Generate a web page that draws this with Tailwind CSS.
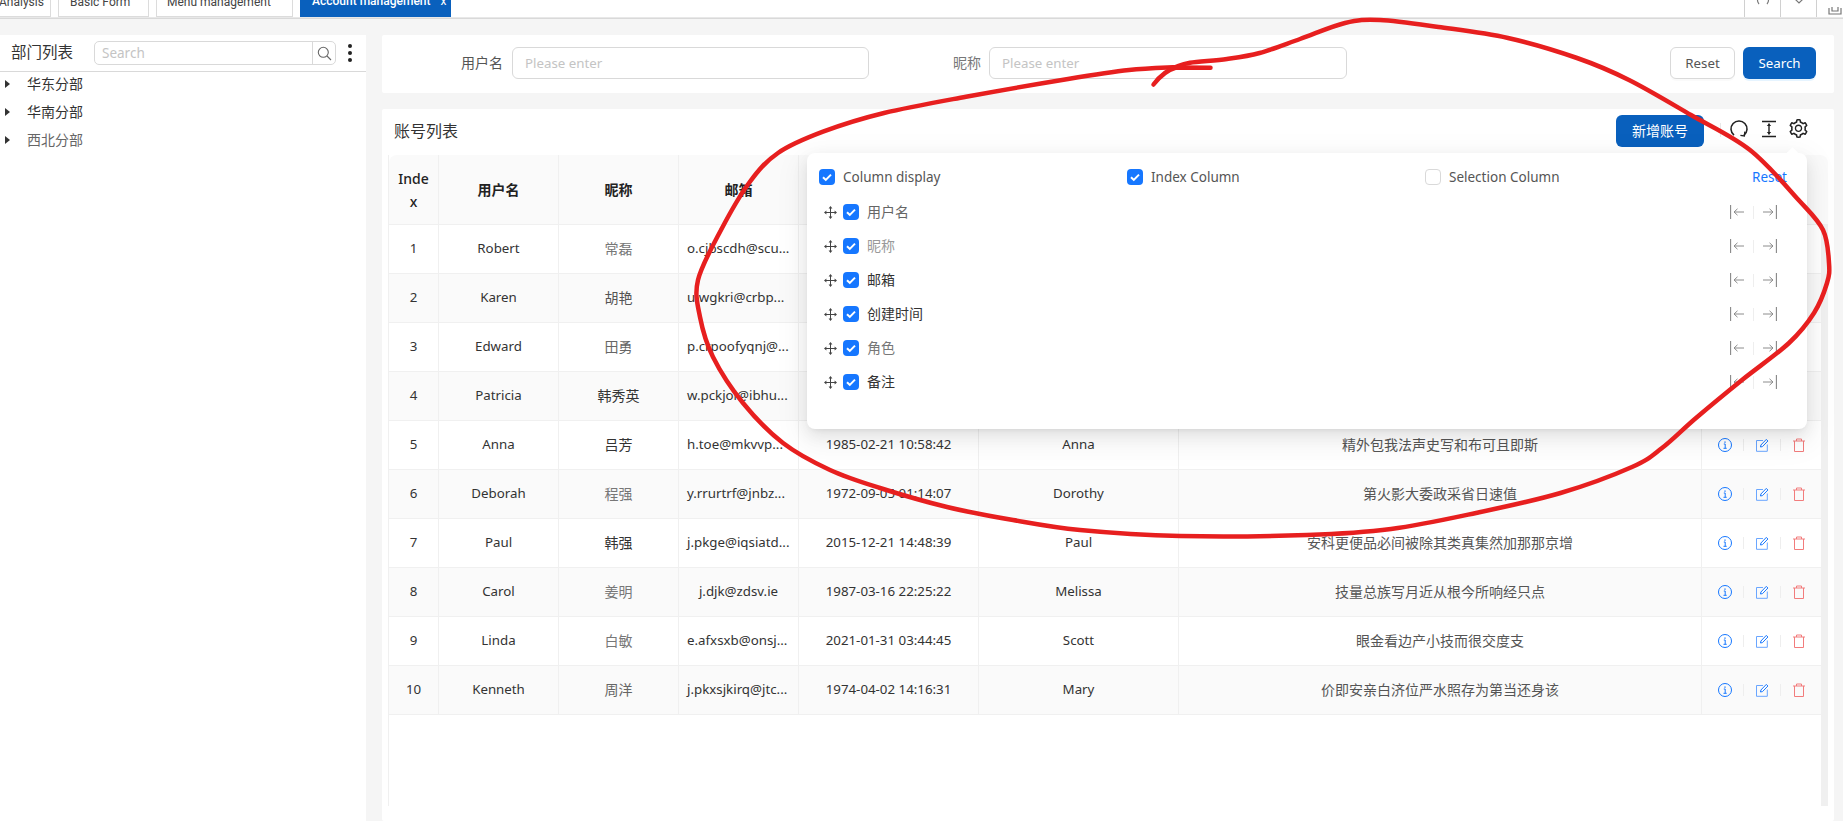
<!DOCTYPE html>
<html lang="zh">
<head>
  <meta charset="UTF-8" />
  <title>Account management</title>
  <script src="https://cdn.jsdelivr.net/npm/@tailwindcss/browser@4"></script>
</head>
<body class="relative h-[821px] overflow-hidden bg-[#f5f5f5] text-[#333] font-['Noto_Sans','Noto_Sans_CJK_SC',sans-serif]">

  <!-- tabs -->
  <div class="h-[19px] overflow-hidden bg-white border-b border-[#d9d9d9] flex items-end">
    <div class="flex-1 flex items-end h-[17px] border-b border-[#e8e8e8] gap-[7px] text-[12px] whitespace-nowrap font-['Roboto',sans-serif]">
      <div class="shrink-0 w-[63px] -ml-[12px] h-[26px] leading-[21px] border border-[#dcdcdc] pl-[10px] text-[#444]">Analysis</div>
      <div class="shrink-0 w-[91px] h-[26px] leading-[21px] border border-[#dcdcdc] pl-[11px] text-[#444]">Basic Form</div>
      <div class="shrink-0 w-[137px] h-[26px] leading-[21px] border border-[#dcdcdc] pl-[10px] text-[#444]">Menu management</div>
      <div class="shrink-0 w-[151px] h-[26px] leading-[21px] flex pl-[12px] gap-[10px] bg-[#0960bd] text-white font-medium">Account management <span class="font-normal text-[12px]">x</span></div>
      <div class="flex-1"></div>
      <div class="shrink-0 w-[36px] h-[26px] border-l border-[#d0d0d0] flex justify-center items-end pb-[10px] text-[#777]">
        <svg class="w-[14px] h-[14px]" viewBox="0 0 14 14" fill="none" stroke="currentColor" stroke-width="1.2"><path d="M3 11A5.5 5.5 0 1 1 11 11"/></svg>
      </div>
      <div class="shrink-0 -ml-[7px] w-[36px] h-[26px] border-l border-[#d0d0d0] flex justify-center items-end pb-[11px] text-[#777]">
        <svg class="w-[14px] h-[14px]" viewBox="0 0 14 14" fill="none" stroke="currentColor" stroke-width="1.2"><path d="M2 6l5 5 5-5"/></svg>
      </div>
      <div class="shrink-0 -ml-[7px] w-[27px] h-[26px] border-l border-[#d0d0d0] pl-[11px] pt-[16px] text-[#777]">
        <svg class="w-[14px] h-[8px]" viewBox="0 0 14 8" fill="none" stroke="currentColor" stroke-width="1.2"><path d="M1 1v6h12V1M4 0v4h6V0"/></svg>
      </div>
    </div>
  </div>

  <main class="flex gap-[16px] pt-[16px] pr-[9px] h-[802px]">

    <!-- department tree -->
    <aside class="w-[366px] shrink-0 bg-white">
      <div class="h-[37px] border-b border-[#d9d9d9] flex items-center">
        <span class="ml-[11px] w-[83px] text-[15.5px] text-[#333]">部门列表</span>
        <div class="w-[242px] h-[24px] border border-[#d9d9d9] rounded-[5px] flex">
          <span class="flex-1 pl-[7px] text-[13.5px] leading-[22px] text-[#c4c4c4]">Search</span>
          <span class="w-[23px] border-l border-[#d9d9d9] flex items-center justify-center">
            <svg class="w-[15px] h-[15px]" viewBox="0 0 15 15" fill="none" stroke="#666" stroke-width="1.1"><circle cx="6.3" cy="6.3" r="5"/><path d="M10 10l4 4"/></svg>
          </span>
        </div>
        <span class="ml-[12px] flex flex-col gap-[3px]">
          <i class="block w-[4px] h-[4px] rounded-full bg-[#222]"></i>
          <i class="block w-[4px] h-[4px] rounded-full bg-[#222]"></i>
          <i class="block w-[4px] h-[4px] rounded-full bg-[#222]"></i>
        </span>
      </div>
      <ul class="text-sm -mt-[2px]">
        <li class="h-[28px] flex items-center pl-[5px]"><i class="border-y-[4px] border-l-[5px] border-y-transparent border-l-[#333]"></i><span class="ml-[17px]">华东分部</span></li>
        <li class="h-[28px] flex items-center pl-[5px]"><i class="border-y-[4px] border-l-[5px] border-y-transparent border-l-[#333]"></i><span class="ml-[17px]">华南分部</span></li>
        <li class="h-[28px] flex items-center pl-[5px]"><i class="border-y-[4px] border-l-[5px] border-y-transparent border-l-[#333]"></i><span class="ml-[17px] text-[#666]">西北分部</span></li>
      </ul>
    </aside>

    <section class="flex-1 flex flex-col gap-[16px] min-w-0">
      <!-- search form -->
      <div class="h-[58px] shrink-0 bg-white rounded-[2px] flex items-center pr-[18px] pb-[2px] text-sm">
        <label class="w-[121px] text-right text-[#555]">用户名</label>
        <div class="ml-[9px] w-[357px] h-[32px] border border-[#d9d9d9] rounded-[6px] pl-[12px] text-[13.3px] leading-[30px] text-[#c4c4c4]">Please enter</div>
        <label class="w-[112px] text-right text-[#777]">昵称</label>
        <div class="ml-[8px] w-[358px] h-[32px] border border-[#d9d9d9] rounded-[6px] pl-[12px] text-[13.3px] leading-[30px] text-[#c4c4c4]">Please enter</div>
        <button class="ml-auto w-[65px] h-[32px] border border-[#d9d9d9] rounded-[6px] text-[13.3px] text-[#555] bg-white shadow-[0_2px_0_rgba(0,0,0,0.02)]">Reset</button>
        <button class="ml-[8px] w-[73px] h-[32px] rounded-[6px] text-[13.3px] text-white bg-[#0960bd] shadow-[0_2px_0_rgba(5,145,255,0.1)]">Search</button>
      </div>

      <!-- account table -->
      <div class="relative flex-1 bg-white rounded-[2px] pl-[6px]">
        <div class="h-[46px] flex items-start">
          <h2 class="mt-[10px] ml-[6px] text-base text-[#333]">账号列表</h2>
          <button class="ml-auto mt-[6px] w-[88px] h-[32px] rounded-[6px] text-sm text-white bg-[#0960bd]">新增账号</button>
          <span class="mt-[14px] ml-[16px] w-px h-[14px] bg-[#e8e8e8]"></span>
          <span class="mt-[10px] ml-[8px] w-[20px] h-[20px]">
            <svg class="w-[20px] h-[20px]" viewBox="0 0 20 20" fill="none" stroke="#222" stroke-width="1.6"><path d="M5 16.2A8 8 0 1 1 15 16.2"/><path d="M15.8 12.6l-.4 4.4-4-.6" stroke-width="1.3"/></svg>
          </span>
          <span class="mt-[11px] ml-[11px] w-[18px] h-[18px]">
            <svg class="w-[18px] h-[18px]" viewBox="0 0 18 18" fill="none" stroke="#222" stroke-width="1.4"><path d="M2 1.5h14M2 16.5h14M9 3.5v11"/><path d="M6.8 6L9 3.5 11.2 6zM6.8 12L9 14.5 11.2 12z" fill="#222" stroke="none"/></svg>
          </span>
          <span class="mt-[10px] ml-[11px] mr-[26px] w-[19px] h-[19px]">
            <svg class="w-[19px] h-[19px]" viewBox="64 64 896 896" fill="#222"><path d="M924.8 625.7l-65.5-56c3.1-19 4.7-38.4 4.7-57.8s-1.6-38.8-4.7-57.8l65.5-56a32.03 32.03 0 0 0 9.3-35.2l-.9-2.6a443.74 443.74 0 0 0-79.7-137.9l-1.8-2.1a32.12 32.12 0 0 0-35.1-9.5l-81.3 28.9c-30-24.6-63.5-44-99.7-57.6l-15.7-85a32.05 32.05 0 0 0-25.8-25.7l-2.7-.5c-52.1-9.4-106.9-9.4-159 0l-2.7.5a32.05 32.05 0 0 0-25.8 25.7l-15.8 85.4a351.86 351.86 0 0 0-99 57.4l-81.9-29.1a32 32 0 0 0-35.1 9.5l-1.8 2.1a446.02 446.02 0 0 0-79.7 137.9l-.9 2.6c-4.5 12.5-.8 26.5 9.3 35.2l66.3 56.6c-3.1 18.8-4.6 38-4.6 57.1 0 19.2 1.5 38.4 4.6 57.1L99 625.5a32.03 32.03 0 0 0-9.3 35.2l.9 2.6c18.1 50.4 44.9 96.9 79.7 137.9l1.8 2.1a32.12 32.12 0 0 0 35.1 9.5l81.9-29.1c29.8 24.5 63.1 43.9 99 57.4l15.8 85.4a32.05 32.05 0 0 0 25.8 25.7l2.7.5a449.4 449.4 0 0 0 159 0l2.7-.5a32.05 32.05 0 0 0 25.8-25.7l15.7-85a350 350 0 0 0 99.7-57.6l81.3 28.9a32 32 0 0 0 35.1-9.5l1.8-2.1c34.8-41.1 61.6-87.5 79.7-137.9l.9-2.6c4.5-12.3.8-26.3-9.3-35zM788.3 465.9c2.5 15.1 3.8 30.6 3.8 46.1s-1.3 31-3.8 46.1l-6.6 40.1 74.7 63.9a370.03 370.03 0 0 1-42.6 73.6L721 702.8l-31.4 25.8c-23.9 19.6-50.5 35-79.3 45.8l-38.1 14.3-17.9 97a377.5 377.5 0 0 1-85 0l-17.9-97.2-37.8-14.5c-28.5-10.8-55-26.2-78.7-45.7l-31.4-25.9-93.4 33.2c-17-22.9-31.2-47.6-42.6-73.6l75.5-64.5-6.5-40c-2.4-14.9-3.7-30.3-3.7-45.5 0-15.3 1.2-30.6 3.7-45.5l6.5-40-75.5-64.5c11.3-26.1 25.6-50.7 42.6-73.6l93.4 33.2 31.4-25.9c23.7-19.5 50.2-34.9 78.7-45.7l37.9-14.3 17.9-97.2c28.1-3.2 56.8-3.2 85 0l17.9 97 38.1 14.3c28.7 10.8 55.4 26.2 79.3 45.8l31.4 25.8 92.8-32.9c17 22.9 31.2 47.6 42.6 73.6L781.8 426l6.5 39.9zM512 326c-97.2 0-176 78.8-176 176s78.8 176 176 176 176-78.8 176-176-78.8-176-176-176zm79.2 255.2A111.6 111.6 0 0 1 512 614c-29.9 0-58-11.7-79.2-32.8A111.6 111.6 0 0 1 400 502c0-29.9 11.7-58 32.8-79.2C454 401.6 482.1 390 512 390c29.9 0 58 11.6 79.2 32.8A111.6 111.6 0 0 1 624 502c0 29.9-11.7 58-32.8 79.2z"/></svg>
          </span>
        </div>

        <div class="w-[1440px] h-[651px] border-l border-[#f0f0f0] flex flex-col">
          <table class="table-fixed border-separate border-spacing-0 w-[1439px] rounded-t-[8px] overflow-hidden">
            <colgroup><col class="w-[50px]"><col class="w-[120px]"><col class="w-[120px]"><col class="w-[120px]"><col class="w-[180px]"><col class="w-[200px]"><col class="w-[523px]"><col></colgroup>
            <thead>
              <tr class="h-[70px] bg-[#fafafa] text-sm leading-[23px] font-semibold text-[#222]">
                <th class="border-r border-b border-[#f0f0f0] px-[8px] font-medium break-all">Index</th>
                <th class="border-r border-b border-[#f0f0f0] font-semibold">用户名</th>
                <th class="border-r border-b border-[#f0f0f0] font-semibold">昵称</th>
                <th class="border-r border-b border-[#f0f0f0] font-semibold">邮箱</th>
                <th class="border-r border-b border-[#f0f0f0] font-semibold">创建时间</th>
                <th class="border-r border-b border-[#f0f0f0] font-semibold">角色</th>
                <th class="border-r border-b border-[#f0f0f0] font-semibold">备注</th>
                <th class="border-b border-[#f0f0f0] font-semibold">操作</th>
              </tr>
            </thead>
          </table>
          <div class="flex-1 flex min-h-0">
            <table class="table-fixed border-separate border-spacing-0 w-[1432px] h-fit">
              <colgroup><col class="w-[50px]"><col class="w-[120px]"><col class="w-[120px]"><col class="w-[120px]"><col class="w-[180px]"><col class="w-[200px]"><col class="w-[523px]"><col></colgroup>
              <tbody id="rows"></tbody>
            </table>
            <div class="w-[7px] bg-[#f0f0f0]"></div>
          </div>
        </div>

        <!-- column settings popover -->
        <div class="absolute top-[44px] left-[425px] w-[1000px] h-[276px] z-10 bg-white rounded-[8px] text-[#555] shadow-[0_6px_16px_0_rgba(0,0,0,0.08),0_3px_6px_-4px_rgba(0,0,0,0.12),0_9px_28px_8px_rgba(0,0,0,0.05)]">
          <i class="absolute -top-[4px] left-[981px] w-[9px] h-[9px] rotate-45 bg-white"></i>
          <div class="flex items-center h-[24px] mt-[12px] pl-[12px] pr-[20px] text-[13.5px]">
            <label class="w-[308px] flex items-center gap-[8px]"><span class="check"></span>Column display</label>
            <label class="w-[298px] flex items-center gap-[8px]"><span class="check"></span>Index Column</label>
            <label class="flex items-center gap-[8px]"><span class="w-[16px] h-[16px] border border-[#d9d9d9] rounded-[4px]"></span>Selection Column</label>
            <span class="ml-auto text-[#1677ff]">Reset</span>
          </div>
          <ul id="cols" class="mt-[6px] text-sm"></ul>
        </div>
      </div>
    </section>
  </main>

  <!-- hand-drawn annotation -->
  <svg class="absolute inset-0 z-20 w-[1843px] h-[821px] pointer-events-none" viewBox="0 0 1843 821" fill="none" stroke="#e71f1f" stroke-width="4.5" stroke-linecap="round" stroke-linejoin="round">
    <path id="scribble"/>
    <path d="M1153.5 84.5C1160 76 1167 70 1176 67.5L1210.5 67.7"/>
  </svg>

  <script>
    const rows = [
      [1, "Robert", "常磊", "o.cjbscdh@scu...", "text-[#777]"],
      [2, "Karen", "胡艳", "u.wgkri@crbp...", "text-[#555]"],
      [3, "Edward", "田勇", "p.crpoofyqnj@...", "text-[#666]"],
      [4, "Patricia", "韩秀英", "w.pckjol@ibhu...", "text-[#333]"],
      [5, "Anna", "吕芳", "h.toe@mkvvp...", "text-[#333]", "1985-02-21 10:58:42", "Anna", "精外包我法声史写和布可且即斯"],
      [6, "Deborah", "程强", "y.rrurtrf@jnbz...", "text-[#777]", "1972-09-05 01:14:07", "Dorothy", "第火影大委政采省日速值"],
      [7, "Paul", "韩强", "j.pkge@iqsiatd...", "text-[#333]", "2015-12-21 14:48:39", "Paul", "安科更便品必间被除其类真集然加那那京增"],
      [8, "Carol", "姜明", "j.djk@zdsv.ie", "text-[#777]", "1987-03-16 22:25:22", "Melissa", "技量总族写月近从根今所响经只点"],
      [9, "Linda", "白敏", "e.afxsxb@onsj...", "text-[#777]", "2021-01-31 03:44:45", "Scott", "眼金看边产小技而很交度支"],
      [10, "Kenneth", "周洋", "j.pkxsjkirq@jtc...", "text-[#666]", "1974-04-02 14:16:31", "Mary", "价即安亲白济位严水照存为第当还身该"]
    ];

    const actions = `
      <div class="flex items-center justify-center gap-[11px]">
        <svg class="w-[14px] h-[14px]" viewBox="0 0 14 14" fill="none" stroke="#1677ff"><circle cx="7" cy="7" r="6.5"/><path d="M5.8 6h1.4v4.2M5.5 10.3h3.2"/><path d="M7 3.6v1.2" stroke-width="1.3"/></svg>
        <i class="w-px h-[12px] bg-[#eee]"></i>
        <svg class="w-[14px] h-[14px]" viewBox="0 0 14 14" fill="none" stroke="#1677ff"><path d="M8 2.5H1.5v10.8h10.8V6.5" stroke="#6aa6ff"/><path d="M5.5 9l.4-2 5.4-5.6 1.6 1.6L7.5 8.6z" fill="#fff"/></svg>
        <i class="w-px h-[12px] bg-[#eee]"></i>
        <svg class="w-[14px] h-[14px]" viewBox="0 0 14 14" fill="none" stroke="#f27c7c"><path d="M1 3h12M4.5 3V1h5v2M2.5 3v10.5h9V3"/></svg>
      </div>`;

    document.getElementById("rows").innerHTML = rows.map((r, i) => `
      <tr class="h-[49px] text-[13.3px] text-center text-[#333] ${i % 2 ? "bg-[#fafafa]" : "bg-white"}">
        <td class="border-r border-b border-[#f0f0f0]">${r[0]}</td>
        <td class="border-r border-b border-[#f0f0f0]">${r[1]}</td>
        <td class="border-r border-b border-[#f0f0f0] text-sm ${r[4]}">${r[2]}</td>
        <td class="border-r border-b border-[#f0f0f0] whitespace-nowrap overflow-hidden ${r[3].endsWith("...") ? "text-left pl-[8px]" : ""}">${r[3]}</td>
        <td class="border-r border-b border-[#f0f0f0]">${r[5] || ""}</td>
        <td class="border-r border-b border-[#f0f0f0]">${r[6] || ""}</td>
        <td class="border-r border-b border-[#f0f0f0] text-sm text-[#555]">${r[7] || ""}</td>
        <td class="border-b border-[#f0f0f0]">${actions}</td>
      </tr>`).join("");

    const checkIcon = `<svg class="w-[16px] h-[16px] shrink-0" viewBox="0 0 16 16"><rect width="16" height="16" rx="4" fill="#1677ff"/><path d="M4 8.2l2.8 2.7L12 5.6" fill="none" stroke="#fff" stroke-width="2"/></svg>`;
    document.querySelectorAll(".check").forEach(el => { el.outerHTML = checkIcon; });

    const dragIcon = `<svg class="w-[13px] h-[13px] shrink-0" viewBox="0 0 13 13" fill="#444"><path d="M6 2h1v9H6zM2 6h9v1H2z"/><path d="M6.5 0L8.4 2.4H4.6zM6.5 13L4.6 10.6H8.4zM0 6.5L2.4 4.6V8.4zM13 6.5L10.6 8.4V4.6z"/></svg>`;
    const fixIcons = `
      <span class="ml-auto flex items-center text-[#8c8c8c]">
        <svg class="w-[14px] h-[14px]" viewBox="0 0 14 14" fill="none" stroke="currentColor"><path d="M.5 0v14" stroke-width="1.3"/><path d="M14 7H4M7.5 3.8L4 7l3.5 3.2"/></svg>
        <i class="mx-[9px] w-px h-[13px] bg-[#eee]"></i>
        <svg class="w-[14px] h-[14px]" viewBox="0 0 14 14" fill="none" stroke="currentColor"><path d="M13.5 0v14" stroke-width="1.3"/><path d="M0 7h10M6.5 3.8L10 7l-3.5 3.2"/></svg>
      </span>`;
    const columns = [
      ["用户名", "text-[#666]"], ["昵称", "text-[#999]"], ["邮箱", "text-[#333]"],
      ["创建时间", "text-[#333]"], ["角色", "text-[#777]"], ["备注", "text-[#333]"]
    ];
    document.getElementById("cols").innerHTML = columns.map(([name, color]) => `
      <li class="h-[34px] flex items-center pl-[17px] pr-[30px]">
        ${dragIcon}
        <span class="ml-[6px]">${checkIcon}</span>
        <span class="ml-[8px] ${color}">${name}</span>
        ${fixIcons}
      </li>`).join("");

    // trace of the red circle, smoothed with catmull-rom
    const pts = [[1176,67],[1190,62.7],[1227,59],[1259.6,53],[1300,39],[1345,23],[1380,20],[1438.5,27],[1508,38],[1577,58],[1629,80],[1691,115],[1750,150],[1798.6,200],[1823,230],[1829,263],[1827,283],[1814,313],[1789,343],[1742,380],[1696,418],[1662,448],[1632,467],[1560.5,493],[1476,513],[1391,529],[1307,535],[1180,536],[1080,530],[1013,520],[947,507],[880,488],[830,470],[783,443],[743,403],[713,357],[700,317],[698,280],[721,230],[749,183],[778,153],[823,131.7],[884,113],[966,96.7],[1068,79],[1129,70],[1176,67]];
    let d = `M${pts[0]}`;
    for (let i = 0; i < pts.length - 1; i++) {
      const p0 = pts[i - 1] || pts[i], p1 = pts[i], p2 = pts[i + 1], p3 = pts[i + 2] || p2;
      d += `C${p1[0] + (p2[0] - p0[0]) / 6} ${p1[1] + (p2[1] - p0[1]) / 6} ${p2[0] - (p3[0] - p1[0]) / 6} ${p2[1] - (p3[1] - p1[1]) / 6} ${p2[0]} ${p2[1]}`;
    }
    document.getElementById("scribble").setAttribute("d", d);
  </script>
</body>
</html>
